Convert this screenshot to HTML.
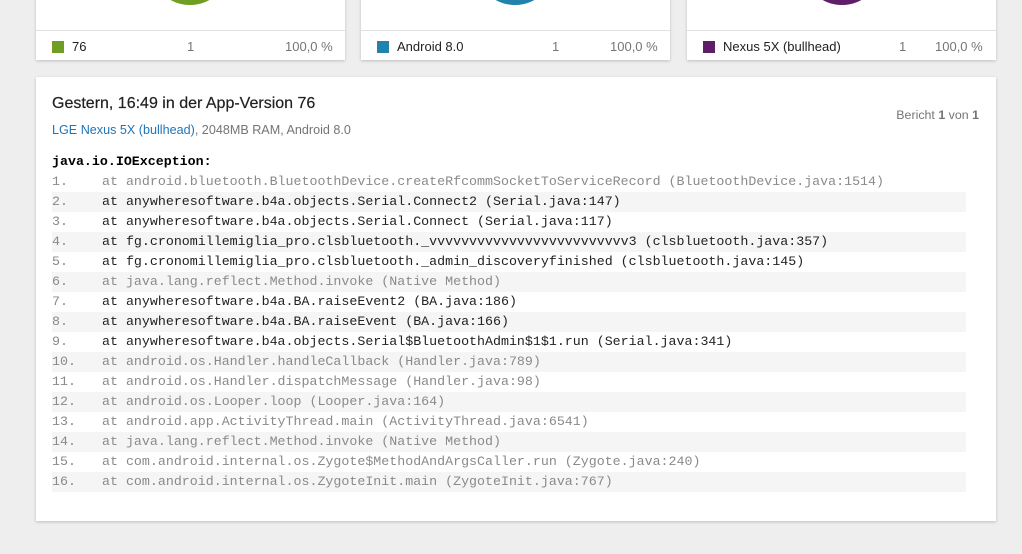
<!DOCTYPE html>
<html><head><meta charset="utf-8"><style>
body{margin:0;width:1022px;height:554px;background:#eeeeee;font-family:"Liberation Sans",sans-serif;position:relative;overflow:hidden}
.card{position:absolute;background:#fff;box-shadow:0 1px 3px rgba(0,0,0,.2)}
.top{top:-4px;height:64px;width:309px;overflow:hidden}
.pie{position:absolute;width:80px;height:80px;border-radius:50%;top:-71px}
.div{position:absolute;left:0;right:0;top:34px;border-top:1px solid #e0e0e0}
.leg{position:absolute;top:43px;font-size:13px;color:#212121;left:0;right:0}
.leg span{position:absolute}
.sq{width:12px;height:12px;top:2px}
.g{color:#757575}
.main{left:36px;top:77px;width:960px;height:444px}
.row{position:absolute;left:16px;width:914px;height:20px;font-family:"Liberation Mono",monospace;font-size:13.3px;line-height:20px;white-space:pre;color:#222}
.row i{font-style:normal;position:absolute;left:0;color:#8a8a8a}
.row b{font-weight:normal;position:absolute;left:50px}
.row.s{background:#f5f5f5}
.row.x{color:#8a8a8a}
</style></head><body>
<div class="card top" style="left:36px"><div class="pie" style="left:114px;background:#6f9e22"></div><div class="div"></div>
<div class="leg"><span class="sq" style="left:16px;background:#6f9e22"></span><span style="left:36px">76</span><span class="g" style="left:151px">1</span><span class="g" style="left:249px">100,0 %</span></div></div>
<div class="card top" style="left:361px"><div class="pie" style="left:114px;background:#2381ad"></div><div class="div"></div>
<div class="leg"><span class="sq" style="left:16px;background:#2381ad"></span><span style="left:36px">Android 8.0</span><span class="g" style="left:191px">1</span><span class="g" style="left:249px">100,0 %</span></div></div>
<div class="card top" style="left:687px"><div class="pie" style="left:115px;background:#5e1f68"></div><div class="div"></div>
<div class="leg"><span class="sq" style="left:16px;background:#5e1f68"></span><span style="left:36px">Nexus 5X (bullhead)</span><span class="g" style="left:212px">1</span><span class="g" style="left:248px">100,0 %</span></div></div>

<div class="card main">
<div style="position:absolute;left:16px;top:18px;font-size:16px;color:#212121;-webkit-text-stroke:0.2px #212121">Gestern, 16:49 in der App-Version 76</div>
<div style="position:absolute;right:17px;top:31px;font-size:12.4px;color:#757575">Bericht <b>1</b> von <b>1</b></div>
<div style="position:absolute;left:16px;top:46px;font-size:12.6px;color:#757575"><span style="color:#1e75b8">LGE Nexus 5X (bullhead)</span>, 2048MB RAM, Android 8.0</div>
<div class="row" style="top:75px;font-weight:bold;color:#000">java.io.IOException:</div>
<div class="row x" style="top:95px"><i>1.</i><b>at android.bluetooth.BluetoothDevice.createRfcommSocketToServiceRecord (BluetoothDevice.java:1514)</b></div>
<div class="row s" style="top:115px"><i>2.</i><b>at anywheresoftware.b4a.objects.Serial.Connect2 (Serial.java:147)</b></div>
<div class="row" style="top:135px"><i>3.</i><b>at anywheresoftware.b4a.objects.Serial.Connect (Serial.java:117)</b></div>
<div class="row s" style="top:155px"><i>4.</i><b>at fg.cronomillemiglia_pro.clsbluetooth._vvvvvvvvvvvvvvvvvvvvvvvvv3 (clsbluetooth.java:357)</b></div>
<div class="row" style="top:175px"><i>5.</i><b>at fg.cronomillemiglia_pro.clsbluetooth._admin_discoveryfinished (clsbluetooth.java:145)</b></div>
<div class="row s x" style="top:195px"><i>6.</i><b>at java.lang.reflect.Method.invoke (Native Method)</b></div>
<div class="row" style="top:215px"><i>7.</i><b>at anywheresoftware.b4a.BA.raiseEvent2 (BA.java:186)</b></div>
<div class="row s" style="top:235px"><i>8.</i><b>at anywheresoftware.b4a.BA.raiseEvent (BA.java:166)</b></div>
<div class="row" style="top:255px"><i>9.</i><b>at anywheresoftware.b4a.objects.Serial$BluetoothAdmin$1$1.run (Serial.java:341)</b></div>
<div class="row s x" style="top:275px"><i>10.</i><b>at android.os.Handler.handleCallback (Handler.java:789)</b></div>
<div class="row x" style="top:295px"><i>11.</i><b>at android.os.Handler.dispatchMessage (Handler.java:98)</b></div>
<div class="row s x" style="top:315px"><i>12.</i><b>at android.os.Looper.loop (Looper.java:164)</b></div>
<div class="row x" style="top:335px"><i>13.</i><b>at android.app.ActivityThread.main (ActivityThread.java:6541)</b></div>
<div class="row s x" style="top:355px"><i>14.</i><b>at java.lang.reflect.Method.invoke (Native Method)</b></div>
<div class="row x" style="top:375px"><i>15.</i><b>at com.android.internal.os.Zygote$MethodAndArgsCaller.run (Zygote.java:240)</b></div>
<div class="row s x" style="top:395px"><i>16.</i><b>at com.android.internal.os.ZygoteInit.main (ZygoteInit.java:767)</b></div>
</div>
</body></html>
